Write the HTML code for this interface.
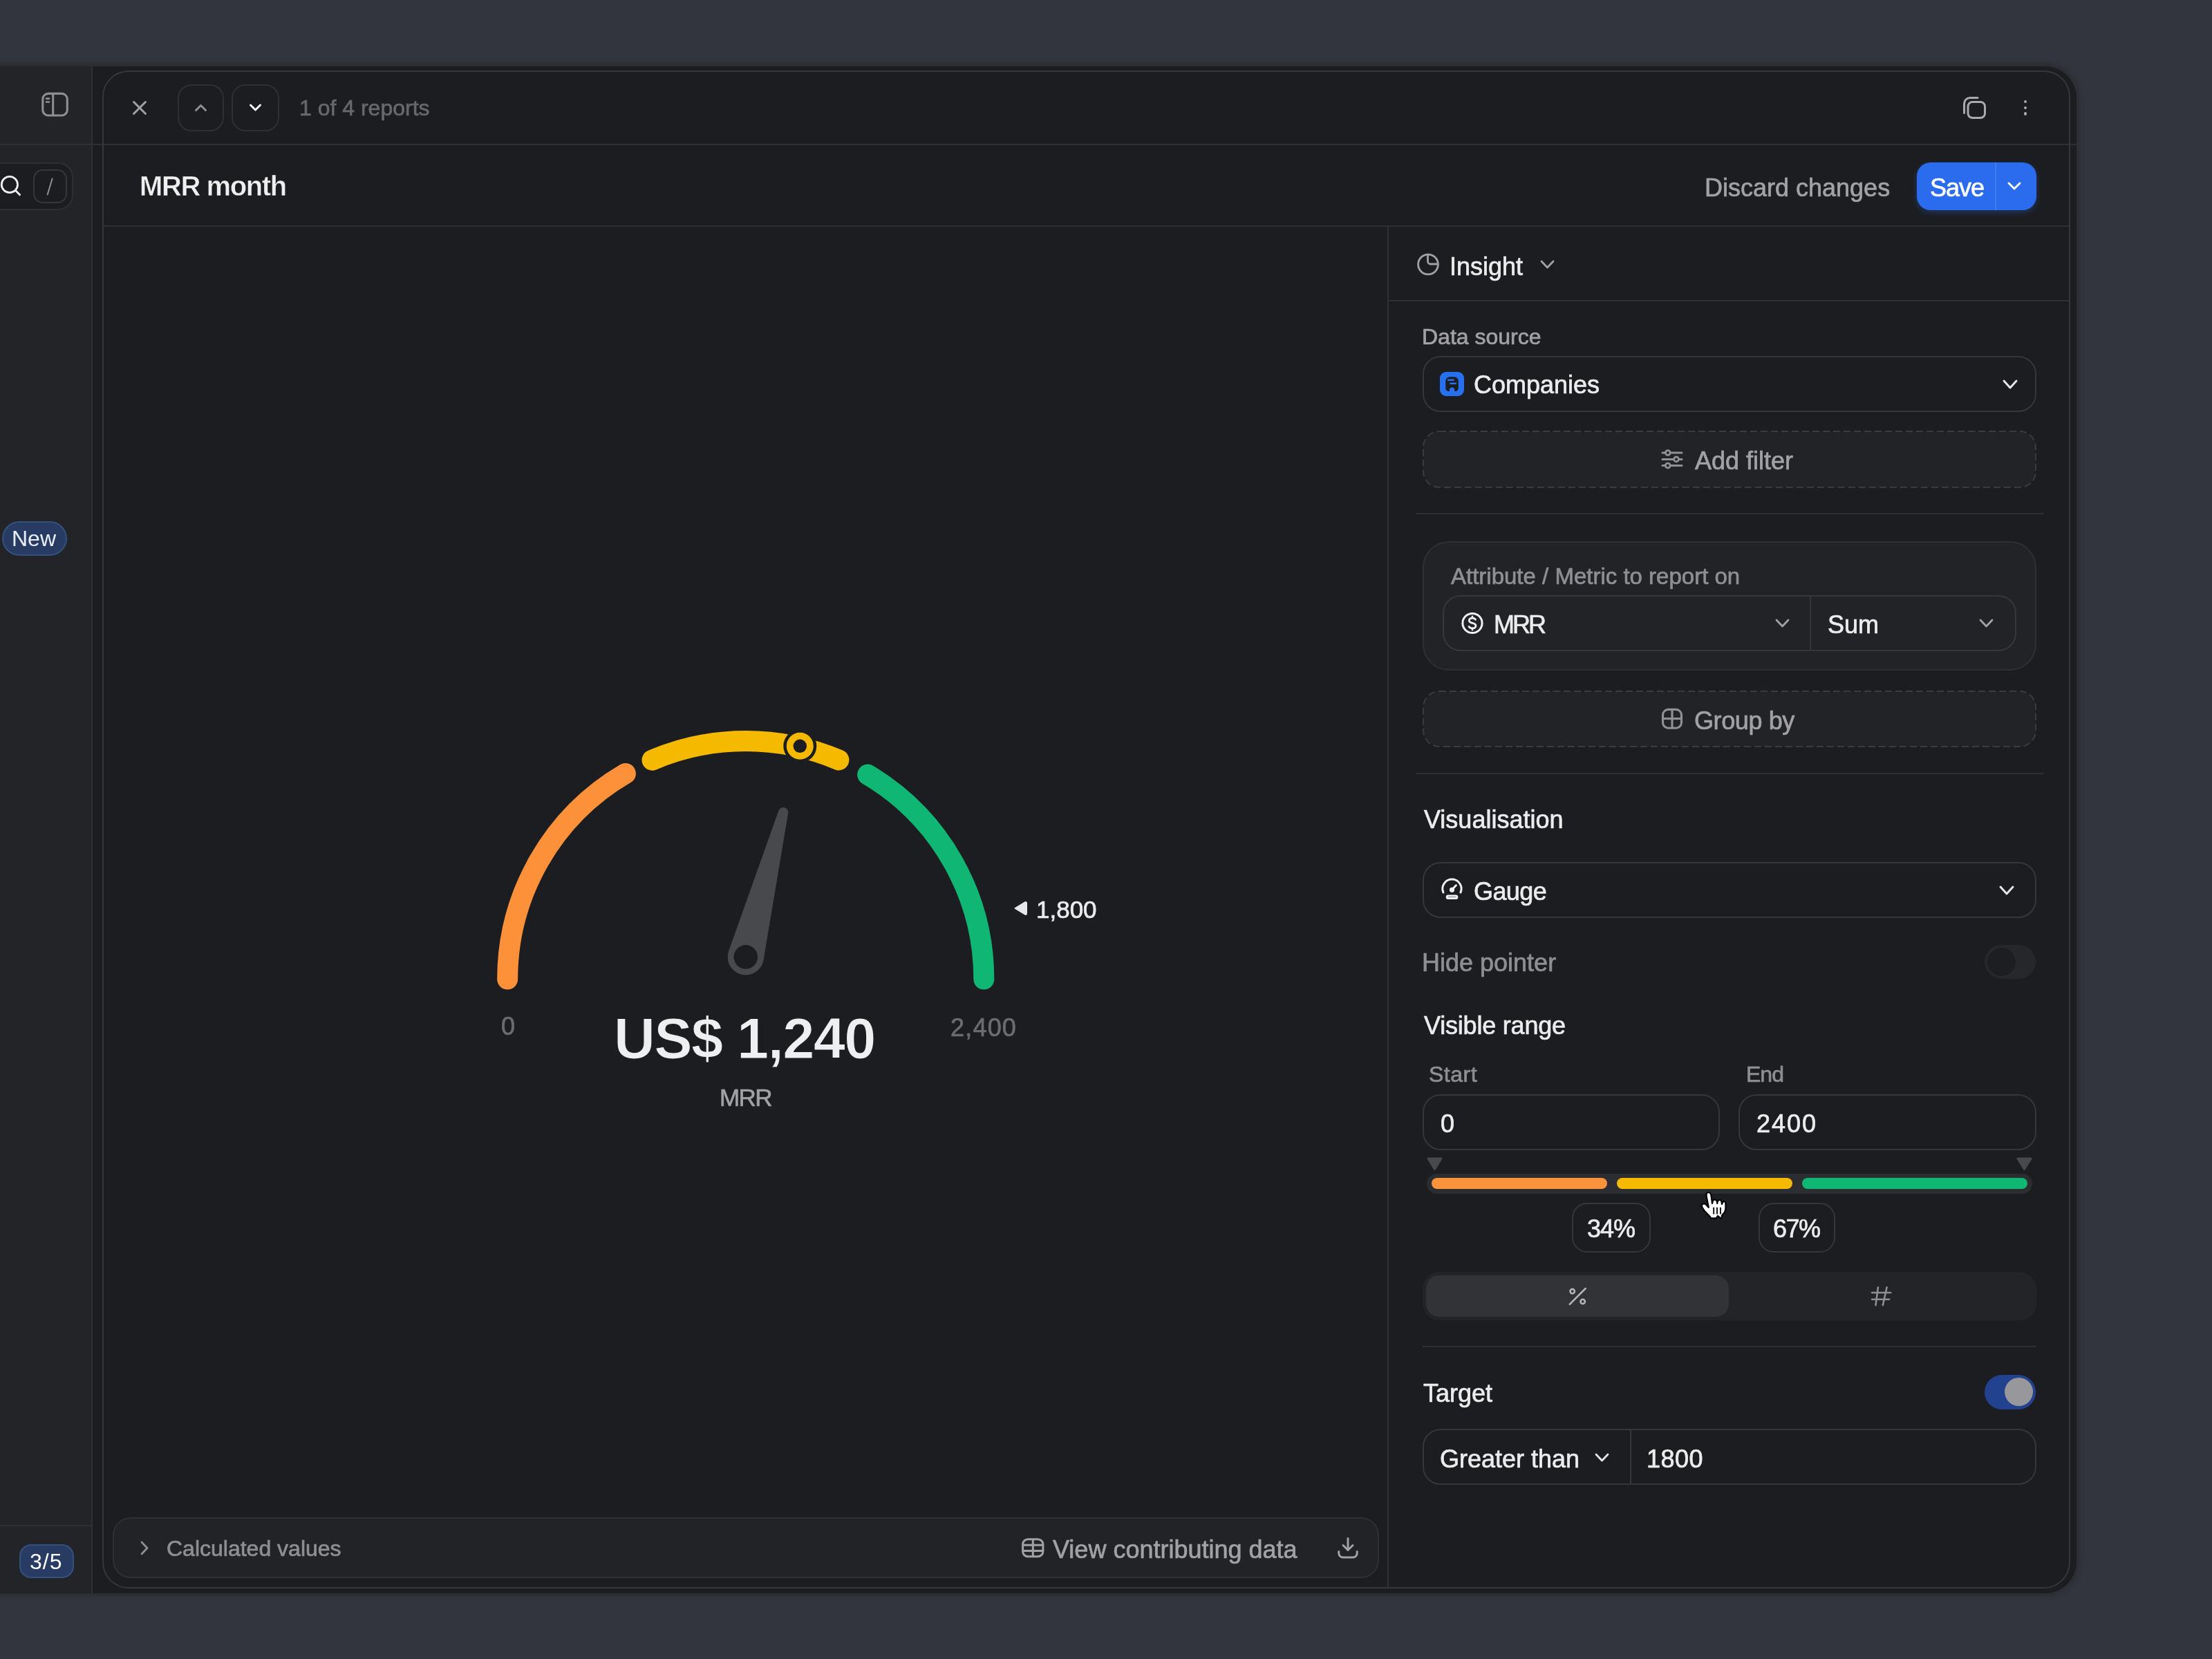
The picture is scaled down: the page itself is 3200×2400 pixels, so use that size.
<!DOCTYPE html>
<html><head><meta charset="utf-8"><style>
html,body{margin:0;padding:0;}
body{width:3200px;height:2400px;overflow:hidden;position:relative;background:#32353e;font-family:"Liberation Sans", sans-serif;}
.t{position:absolute;will-change:transform;font-family:"Liberation Sans", sans-serif;line-height:1;white-space:nowrap;}
</style></head><body>
<div style="position:absolute;left:-60px;top:96px;width:3064px;height:2209px;box-sizing:border-box;background:#1c1d20;border-radius:46px;box-shadow:0 0 7px 3px rgba(42,42,44,0.9);"></div>
<div style="position:absolute;left:0px;top:96px;width:134px;height:2209px;box-sizing:border-box;background:#232428;border-right:2px solid #2f3034;"></div>
<div style="position:absolute;left:0px;top:208px;width:3004px;height:2px;box-sizing:border-box;background:#2f3034;"></div>
<div style="position:absolute;left:0px;top:2206px;width:132px;height:2px;box-sizing:border-box;background:#2f3034;"></div>
<div style="position:absolute;left:148px;top:102px;width:2847px;height:2196px;box-sizing:border-box;border:2px solid #36373b;border-radius:38px;"></div>
<div style="position:absolute;left:150px;top:326px;width:2843px;height:2px;box-sizing:border-box;background:#2f3034;"></div>
<div style="position:absolute;left:2007px;top:328px;width:2px;height:1968px;box-sizing:border-box;background:#2f3034;"></div>
<div style="position:absolute;left:2009px;top:434px;width:984px;height:2px;box-sizing:border-box;background:#2f3034;"></div>
<svg style="position:absolute;left:58px;top:132px;overflow:visible;" width="44" height="40" viewBox="0 0 44 40"><rect x="3.8" y="3.4" width="35.5" height="31.6" rx="8" fill="none" stroke="#8e8f94" stroke-width="3.1"/><line x1="18.7" y1="3.4" x2="18.7" y2="35" stroke="#8e8f94" stroke-width="3"/><line x1="9" y1="10.6" x2="13" y2="10.6" stroke="#8e8f94" stroke-width="2.6" stroke-linecap="round"/><line x1="9" y1="15.5" x2="13" y2="15.5" stroke="#8e8f94" stroke-width="2.6" stroke-linecap="round"/></svg>
<div style="position:absolute;left:-40px;top:235px;width:146px;height:69px;box-sizing:border-box;background:#1c1d20;border:2px solid #2f3034;border-radius:22px;"></div>
<div style="position:absolute;left:48px;top:245px;width:49px;height:49px;box-sizing:border-box;border:2px solid #36373b;border-radius:14px;"></div>
<svg style="position:absolute;left:0px;top:252px;overflow:visible;" width="34" height="34" viewBox="0 0 34 34"><circle cx="13.9" cy="15" r="11.6" fill="none" stroke="#f0f0f2" stroke-width="2.8"/><line x1="22.4" y1="23.5" x2="28.6" y2="29.8" stroke="#f0f0f2" stroke-width="2.8" stroke-linecap="round"/></svg>
<svg style="position:absolute;left:60px;top:255px;overflow:visible;" width="24" height="32" viewBox="0 0 24 32"><line x1="15.6" y1="3.5" x2="8.7" y2="26.5" stroke="#8e8f94" stroke-width="2" stroke-linecap="round"/></svg>
<div style="position:absolute;left:3px;top:754px;width:94px;height:50px;box-sizing:border-box;background:#283c63;border:2px solid #33507f;border-radius:25px;"></div>
<div class="t" style="left:16.6px;top:762.8px;font-size:32px;color:#e8eefb;font-weight:400;letter-spacing:0px;-webkit-text-stroke:0.7px #e8eefb;-webkit-text-stroke:0;">New</div>
<div style="position:absolute;left:28px;top:2234px;width:79px;height:49px;box-sizing:border-box;background:#283c63;border:2px solid #33507f;border-radius:17px;"></div>
<div class="t" style="left:42.6px;top:2242.8px;font-size:32px;color:#ffffff;font-weight:400;letter-spacing:1px;-webkit-text-stroke:0.7px #ffffff;-webkit-text-stroke:0;">3/5</div>
<svg style="position:absolute;left:188px;top:142px;overflow:visible;" width="28" height="28" viewBox="0 0 28 28"><line x1="5.5" y1="5.5" x2="22.5" y2="22.5" stroke="#a1a1a6" stroke-width="3" stroke-linecap="round"/><line x1="22.5" y1="5.5" x2="5.5" y2="22.5" stroke="#a1a1a6" stroke-width="3" stroke-linecap="round"/></svg>
<div style="position:absolute;left:257px;top:122px;width:67px;height:68px;box-sizing:border-box;border:2px solid #2f3034;border-radius:20px;"></div>
<div style="position:absolute;left:335px;top:122px;width:69px;height:68px;box-sizing:border-box;border:2px solid #2f3034;border-radius:20px;"></div>
<svg style="position:absolute;left:278px;top:146px;overflow:visible;" width="26" height="20" viewBox="0 0 26 20"><polyline points="5.5,13.5 12.5,6.5 19.5,13.5" fill="none" stroke="#8e8f94" stroke-width="3" stroke-linecap="round" stroke-linejoin="round"/></svg>
<svg style="position:absolute;left:357px;top:146px;overflow:visible;" width="26" height="20" viewBox="0 0 26 20"><polyline points="5.5,6 12.5,13 19.5,6" fill="none" stroke="#f4f4f5" stroke-width="3" stroke-linecap="round" stroke-linejoin="round"/></svg>
<div class="t" style="left:433.4px;top:140.4px;font-size:32px;color:#67686d;font-weight:400;letter-spacing:0px;-webkit-text-stroke:0.7px #67686d;">1 of 4 reports</div>
<svg style="position:absolute;left:2836px;top:136px;overflow:visible;" width="40" height="40" viewBox="0 0 40 40"><rect x="11" y="11.5" width="24.5" height="23" rx="6.5" fill="none" stroke="#a9a9ae" stroke-width="3"/><path d="M5.5 27.5 V14 a8.5 8.5 0 0 1 8.5 -8.5 H25" fill="none" stroke="#a9a9ae" stroke-width="3" stroke-linecap="round"/></svg>
<div style="position:absolute;left:2928px;top:145.10000000000002px;width:4.400000000000091px;height:4.399999999999977px;box-sizing:border-box;background:#a9a9ae;border-radius:50%;"></div>
<div style="position:absolute;left:2928px;top:153.8px;width:4.400000000000091px;height:4.399999999999977px;box-sizing:border-box;background:#a9a9ae;border-radius:50%;"></div>
<div style="position:absolute;left:2928px;top:162.3px;width:4.400000000000091px;height:4.399999999999977px;box-sizing:border-box;background:#a9a9ae;border-radius:50%;"></div>
<div class="t" style="left:201.8px;top:249.6px;font-size:40px;color:#efeff0;font-weight:700;letter-spacing:-1.4px;-webkit-text-stroke:0.5px #1c1d20;margin-top:-1px;">MRR month</div>
<div class="t" style="left:2465.9px;top:254.3px;font-size:36px;color:#a1a1a6;font-weight:400;letter-spacing:0px;-webkit-text-stroke:0.7px #a1a1a6;">Discard changes</div>
<div style="position:absolute;left:2773px;top:235px;width:173px;height:69px;box-sizing:border-box;background:#2b6cee;border-radius:20px;box-shadow:0 3px 9px rgba(43,108,238,0.32);"></div>
<div style="position:absolute;left:2886px;top:235px;width:2px;height:69px;box-sizing:border-box;background:rgba(255,255,255,0.10);"></div>
<div class="t" style="left:2792.1px;top:254.3px;font-size:36px;color:#ffffff;font-weight:400;letter-spacing:-1px;-webkit-text-stroke:0.7px #ffffff;">Save</div>
<svg style="position:absolute;left:2900px;top:258px;overflow:visible;" width="28" height="22" viewBox="0 0 28 22"><polyline points="6,7 14,15 22,7" fill="none" stroke="#ffffff" stroke-width="3" stroke-linecap="round" stroke-linejoin="round"/></svg>
<svg style="position:absolute;left:2046px;top:364px;overflow:visible;" width="40" height="38" viewBox="0 0 40 38"><circle cx="20" cy="18.5" r="14.4" fill="none" stroke="#a1a1a6" stroke-width="2.8"/><path d="M19.5 4.5 V14 a4 4 0 0 0 4 4 H34" fill="none" stroke="#a1a1a6" stroke-width="2.8"/></svg>
<div class="t" style="left:2096.5px;top:367.9px;font-size:36px;color:#ececed;font-weight:400;letter-spacing:0px;-webkit-text-stroke:0.7px #ececed;">Insight</div>
<svg style="position:absolute;left:2225.5px;top:374.0px;overflow:visible;" width="25" height="17" viewBox="0 0 25 17"><polyline points="4,4 12.5,13 21,4" fill="none" stroke="#a1a1a6" stroke-width="2.8" stroke-linecap="round" stroke-linejoin="round"/></svg>
<div class="t" style="left:2057.2px;top:470.8px;font-size:32px;color:#a1a1a6;font-weight:400;letter-spacing:0px;-webkit-text-stroke:0.7px #a1a1a6;">Data source</div>
<div style="position:absolute;left:2058px;top:515px;width:888px;height:81px;box-sizing:border-box;border:2px solid #36373b;border-radius:26px;"></div>
<svg style="position:absolute;left:2083px;top:538px;overflow:visible;" width="35" height="35" viewBox="0 0 35 35"><rect x="0" y="0" width="35" height="35" rx="9" fill="#2770f0"/><path d="M8.3 13.2 a6 6 0 0 1 6 -6 h6.5 a6 6 0 0 1 6 6 v10.3 a4.5 4.5 0 0 1 -4.5 4.5 H21.2 V26.25 a3.65 3.65 0 0 0 -7.3 0 V28 H12.8 a4.5 4.5 0 0 1 -4.5 -4.5 Z" fill="#1c1d20"/><line x1="12.2" y1="11.8" x2="19.6" y2="11.8" stroke="#2770f0" stroke-width="2.6" stroke-linecap="round"/><line x1="15.4" y1="16.8" x2="22.8" y2="16.8" stroke="#2770f0" stroke-width="2.6" stroke-linecap="round"/></svg>
<div class="t" style="left:2132.1px;top:539.3px;font-size:36px;color:#ececed;font-weight:400;letter-spacing:0px;-webkit-text-stroke:0.7px #ececed;">Companies</div>
<svg style="position:absolute;left:2895.0px;top:546.5px;overflow:visible;" width="26" height="18" viewBox="0 0 26 18"><polyline points="4,4 13.0,14 22,4" fill="none" stroke="#e6e6e8" stroke-width="3" stroke-linecap="round" stroke-linejoin="round"/></svg>
<svg style="position:absolute;left:2058px;top:623px;overflow:visible;" width="888" height="83" viewBox="0 0 888 83"><rect x="1" y="1" width="886" height="81" rx="23" fill="#222327" stroke="#3a3b3f" stroke-width="2" stroke-dasharray="10 5"/></svg>
<svg style="position:absolute;left:2400px;top:646px;overflow:visible;" width="38" height="36" viewBox="0 0 38 36"><g stroke="#909196" stroke-width="3" stroke-linecap="round" fill="none"><line x1="5" y1="9" x2="33" y2="9"/><line x1="5" y1="18.4" x2="33" y2="18.4"/><line x1="5" y1="27.5" x2="33" y2="27.5"/></g><g fill="#222327" stroke="#909196" stroke-width="2.8"><circle cx="12.8" cy="9" r="3.4"/><circle cx="25.1" cy="18.4" r="3.4"/><circle cx="12.8" cy="27.5" r="3.4"/></g></svg>
<div class="t" style="left:2451.5px;top:649.1px;font-size:36px;color:#a1a1a6;font-weight:400;letter-spacing:0px;-webkit-text-stroke:0.7px #a1a1a6;">Add filter</div>
<div style="position:absolute;left:2048px;top:742px;width:908px;height:2px;box-sizing:border-box;background:#2f3034;"></div>
<div style="position:absolute;left:2058px;top:783px;width:888px;height:187px;box-sizing:border-box;background:#222327;border:2px solid #2f3034;border-radius:38px;"></div>
<div class="t" style="left:2098.9px;top:817.2px;font-size:33px;color:#8e8f94;font-weight:400;letter-spacing:0px;-webkit-text-stroke:0.7px #8e8f94;">Attribute / Metric to report on</div>
<div style="position:absolute;left:2087px;top:861px;width:830px;height:81px;box-sizing:border-box;border:2px solid #36373b;border-radius:26px;"></div>
<div style="position:absolute;left:2618px;top:861px;width:2px;height:81px;box-sizing:border-box;background:#36373b;"></div>
<svg style="position:absolute;left:2112px;top:884px;overflow:visible;" width="36" height="36" viewBox="0 0 36 36"><circle cx="18" cy="17.5" r="14.1" fill="none" stroke="#f0f0f2" stroke-width="3"/><path d="M22.6 12.4 c-0.9 -1.5 -2.6 -2.2 -4.6 -2.2 c-2.8 0 -4.6 1.5 -4.6 3.5 c0 4.9 9.6 2.5 9.6 7.5 c0 2.1 -2 3.6 -5 3.6 c-2.2 0 -4 -0.8 -4.9 -2.3" fill="none" stroke="#f0f0f2" stroke-width="2.8" stroke-linecap="round"/><line x1="18" y1="8" x2="18" y2="10" stroke="#f0f0f2" stroke-width="2.8" stroke-linecap="round"/><line x1="18" y1="25.2" x2="18" y2="27" stroke="#f0f0f2" stroke-width="2.8" stroke-linecap="round"/></svg>
<div class="t" style="left:2160.9px;top:886.3px;font-size:36px;color:#ececed;font-weight:400;letter-spacing:-3px;-webkit-text-stroke:0.7px #ececed;">MRR</div>
<svg style="position:absolute;left:2565.5px;top:893.0px;overflow:visible;" width="25" height="17" viewBox="0 0 25 17"><polyline points="4,4 12.5,13 21,4" fill="none" stroke="#a1a1a6" stroke-width="2.8" stroke-linecap="round" stroke-linejoin="round"/></svg>
<div class="t" style="left:2643.7px;top:886.3px;font-size:36px;color:#ececed;font-weight:400;letter-spacing:0px;-webkit-text-stroke:0.7px #ececed;">Sum</div>
<svg style="position:absolute;left:2861.0px;top:893.0px;overflow:visible;" width="25" height="17" viewBox="0 0 25 17"><polyline points="4,4 12.5,13 21,4" fill="none" stroke="#a1a1a6" stroke-width="2.8" stroke-linecap="round" stroke-linejoin="round"/></svg>
<svg style="position:absolute;left:2058px;top:999px;overflow:visible;" width="888" height="82" viewBox="0 0 888 82"><rect x="1" y="1" width="886" height="80" rx="23" fill="#222327" stroke="#3a3b3f" stroke-width="2" stroke-dasharray="10 5"/></svg>
<svg style="position:absolute;left:2400px;top:1022px;overflow:visible;" width="38" height="36" viewBox="0 0 38 36"><g fill="none" stroke="#909196" stroke-width="3.1"><rect x="5.5" y="4.4" width="27" height="26.9" rx="8"/><line x1="19" y1="4.4" x2="19" y2="31.3"/><line x1="5.5" y1="17.6" x2="32.5" y2="17.6"/></g></svg>
<div class="t" style="left:2450.5px;top:1025.1px;font-size:36px;color:#a1a1a6;font-weight:400;letter-spacing:-0.4px;-webkit-text-stroke:0.7px #a1a1a6;">Group by</div>
<div style="position:absolute;left:2048px;top:1118px;width:908px;height:2px;box-sizing:border-box;background:#2f3034;"></div>
<div class="t" style="left:2059.9px;top:1168.1px;font-size:36px;color:#ececed;font-weight:400;letter-spacing:0px;-webkit-text-stroke:0.7px #ececed;">Visualisation</div>
<div style="position:absolute;left:2058px;top:1247px;width:888px;height:81px;box-sizing:border-box;border:2px solid #36373b;border-radius:26px;"></div>
<svg style="position:absolute;left:2082px;top:1268px;overflow:visible;" width="38" height="38" viewBox="0 0 38 38"><g fill="none" stroke="#f0f0f2" stroke-width="3" stroke-linecap="round"><path d="M5.95 23.06 A13.6 13.6 0 1 1 30.95 23.06"/><rect x="11.2" y="27.9" width="14.7" height="3.7" rx="1.85"/><line x1="18.5" y1="19" x2="24.5" y2="12.8"/></g><circle cx="18.5" cy="19.3" r="3.6" fill="#f0f0f2"/></svg>
<div class="t" style="left:2132.1px;top:1272.1px;font-size:36px;color:#ececed;font-weight:400;letter-spacing:-0.6px;-webkit-text-stroke:0.7px #ececed;">Gauge</div>
<svg style="position:absolute;left:2890.0px;top:1278.5px;overflow:visible;" width="26" height="18" viewBox="0 0 26 18"><polyline points="4,4 13.0,14 22,4" fill="none" stroke="#e6e6e8" stroke-width="3" stroke-linecap="round" stroke-linejoin="round"/></svg>
<div class="t" style="left:2056.9px;top:1375.3px;font-size:36px;color:#8e8f94;font-weight:400;letter-spacing:0px;-webkit-text-stroke:0.7px #8e8f94;">Hide pointer</div>
<div style="position:absolute;left:2871px;top:1367px;width:74px;height:49px;box-sizing:border-box;background:#26272b;border-radius:25px;"></div>
<div style="position:absolute;left:2875px;top:1371px;width:41px;height:41px;box-sizing:border-box;background:#1d1e21;border-radius:50%;box-shadow:0 0 0 1px #2a2b2f;"></div>
<div class="t" style="left:2059.9px;top:1465.5px;font-size:36px;color:#ececed;font-weight:400;letter-spacing:-0.2px;-webkit-text-stroke:0.7px #ececed;">Visible range</div>
<div class="t" style="left:2067.2px;top:1538.0px;font-size:32px;color:#8e8f94;font-weight:400;letter-spacing:0.5px;-webkit-text-stroke:0.7px #8e8f94;">Start</div>
<div class="t" style="left:2525.8px;top:1538.0px;font-size:32px;color:#8e8f94;font-weight:400;letter-spacing:-1px;-webkit-text-stroke:0.7px #8e8f94;">End</div>
<div style="position:absolute;left:2058px;top:1583px;width:430px;height:81px;box-sizing:border-box;border:2px solid #36373b;border-radius:26px;"></div>
<div style="position:absolute;left:2515px;top:1583px;width:431px;height:81px;box-sizing:border-box;border:2px solid #36373b;border-radius:26px;"></div>
<div class="t" style="left:2083.5px;top:1607.5px;font-size:36px;color:#ececed;font-weight:400;letter-spacing:0px;-webkit-text-stroke:0.7px #ececed;">0</div>
<div class="t" style="left:2540.5px;top:1607.5px;font-size:36px;color:#ececed;font-weight:400;letter-spacing:2px;-webkit-text-stroke:0.7px #ececed;">2400</div>
<svg style="position:absolute;left:2063px;top:1673px;overflow:visible;" width="26" height="22" viewBox="0 0 26 22"><path d="M3 3 H22 L12.5 18.5 Z" fill="#48494d" stroke="#48494d" stroke-width="3" stroke-linejoin="round"/></svg>
<svg style="position:absolute;left:2916px;top:1673px;overflow:visible;" width="26" height="22" viewBox="0 0 26 22"><path d="M3 3 H22 L12.5 18.5 Z" fill="#48494d" stroke="#48494d" stroke-width="3" stroke-linejoin="round"/></svg>
<div style="position:absolute;left:2064px;top:1698px;width:876px;height:29px;box-sizing:border-box;background:#2c2d31;border-radius:15px;"></div>
<div style="position:absolute;left:2071px;top:1704px;width:254px;height:16px;box-sizing:border-box;background:#fb923c;border-radius:8px;"></div>
<div style="position:absolute;left:2339px;top:1704px;width:254px;height:16px;box-sizing:border-box;background:#f5b900;border-radius:8px;"></div>
<div style="position:absolute;left:2607px;top:1704px;width:326px;height:16px;box-sizing:border-box;background:#10b674;border-radius:8px;"></div>
<div style="position:absolute;left:2274px;top:1740px;width:114px;height:72px;box-sizing:border-box;border:2px solid #36373b;border-radius:22px;"></div>
<div style="position:absolute;left:2544px;top:1740px;width:111px;height:72px;box-sizing:border-box;border:2px solid #36373b;border-radius:22px;"></div>
<div class="t" style="left:2295.5px;top:1760.1px;font-size:36px;color:#ececed;font-weight:400;letter-spacing:-1px;-webkit-text-stroke:0.7px #ececed;">34%</div>
<div class="t" style="left:2564.5px;top:1760.1px;font-size:36px;color:#ececed;font-weight:400;letter-spacing:-1.5px;-webkit-text-stroke:0.7px #ececed;">67%</div>
<div style="position:absolute;left:2058px;top:1840px;width:888px;height:70px;box-sizing:border-box;background:#232428;border-radius:24px;"></div>
<div style="position:absolute;left:2063px;top:1845px;width:438px;height:60px;box-sizing:border-box;background:#323337;border-radius:19px;"></div>
<svg style="position:absolute;left:2266px;top:1858px;overflow:visible;" width="34" height="34" viewBox="0 0 34 34"><g fill="none" stroke="#b4b4b8" stroke-width="2.6" stroke-linecap="round"><line x1="4.8" y1="28.8" x2="27.8" y2="5.8"/><circle cx="8.7" cy="10.1" r="3.2"/><circle cx="23.7" cy="24.9" r="3.2"/></g></svg>
<svg style="position:absolute;left:2703px;top:1858px;overflow:visible;" width="38" height="36" viewBox="0 0 38 36"><g fill="none" stroke="#8e8f94" stroke-width="2.6" stroke-linecap="round"><line x1="13.9" y1="4.2" x2="10.5" y2="30.2"/><line x1="26.6" y1="4.2" x2="20.8" y2="30.2"/><line x1="5" y1="12" x2="32.2" y2="12"/><line x1="5" y1="21.7" x2="30" y2="21.7"/></g></svg>
<div style="position:absolute;left:2058px;top:1947px;width:888px;height:2px;box-sizing:border-box;background:#2f3034;"></div>
<div class="t" style="left:2058.9px;top:1998.1px;font-size:36px;color:#ececed;font-weight:400;letter-spacing:0px;-webkit-text-stroke:0.7px #ececed;">Target</div>
<div style="position:absolute;left:2871px;top:1989px;width:74px;height:50px;box-sizing:border-box;background:#22428f;border-radius:25px;"></div>
<div style="position:absolute;left:2900px;top:1993px;width:41px;height:41px;box-sizing:border-box;background:#98989c;border-radius:50%;"></div>
<div style="position:absolute;left:2058px;top:2067px;width:888px;height:81px;box-sizing:border-box;border:2px solid #36373b;border-radius:26px;"></div>
<div style="position:absolute;left:2358px;top:2067px;width:2px;height:81px;box-sizing:border-box;background:#36373b;"></div>
<div class="t" style="left:2082.5px;top:2092.9px;font-size:36px;color:#ececed;font-weight:400;letter-spacing:0px;-webkit-text-stroke:0.7px #ececed;">Greater than</div>
<svg style="position:absolute;left:2305.0px;top:2099.5px;overflow:visible;" width="25" height="17" viewBox="0 0 25 17"><polyline points="4,4 12.5,13 21,4" fill="none" stroke="#e6e6e8" stroke-width="2.8" stroke-linecap="round" stroke-linejoin="round"/></svg>
<div class="t" style="left:2382.1px;top:2092.9px;font-size:36px;color:#ececed;font-weight:400;letter-spacing:0.5px;-webkit-text-stroke:0.7px #ececed;">1800</div>
<div style="position:absolute;left:163px;top:2195px;width:1832px;height:88px;box-sizing:border-box;background:#222327;border:2px solid #2f3034;border-radius:26px;"></div>
<svg style="position:absolute;left:199px;top:2226px;overflow:visible;" width="22" height="28" viewBox="0 0 22 28"><polyline points="6,5 14,13.5 6,22" fill="none" stroke="#8e8f94" stroke-width="2.8" stroke-linecap="round" stroke-linejoin="round"/></svg>
<div class="t" style="left:241.2px;top:2223.8px;font-size:32px;color:#8e8f94;font-weight:400;letter-spacing:0px;-webkit-text-stroke:0.7px #8e8f94;">Calculated values</div>
<svg style="position:absolute;left:1474px;top:2222px;overflow:visible;" width="40" height="36" viewBox="0 0 40 36"><g fill="none" stroke="#a1a1a6" stroke-width="3"><rect x="5.6" y="4.7" width="29.3" height="25.1" rx="7.5"/><line x1="5.6" y1="13.2" x2="34.9" y2="13.2"/><line x1="5.6" y1="21.5" x2="34.9" y2="21.5"/><line x1="20.3" y1="4.7" x2="20.3" y2="29.8"/></g></svg>
<div class="t" style="left:1523.1px;top:2223.7px;font-size:36px;color:#a1a1a6;font-weight:400;letter-spacing:0px;-webkit-text-stroke:0.7px #a1a1a6;">View contributing data</div>
<svg style="position:absolute;left:1930px;top:2220px;overflow:visible;" width="40" height="40" viewBox="0 0 40 40"><g fill="none" stroke="#a1a1a6" stroke-width="3" stroke-linecap="round" stroke-linejoin="round"><line x1="20" y1="5.5" x2="20" y2="22"/><polyline points="13,15.5 20,22.5 27,15.5"/><path d="M6.8 24.5 v2.5 a6 6 0 0 0 6 6 h14.4 a6 6 0 0 0 6 -6 v-2.5"/></g></svg>
<svg style="position:absolute;left:0;top:0" width="3200" height="2400" viewBox="0 0 3200 2400"><path d="M734.15 1416.60 A344.6 344.6 0 0 1 904.89 1119.07" fill="none" stroke="#fc913a" stroke-width="30" stroke-linecap="round"/><path d="M943.55 1099.63 A344.6 344.6 0 0 1 1213.40 1099.39" fill="none" stroke="#f5b900" stroke-width="30" stroke-linecap="round"/><path d="M1255.20 1120.60 A344.6 344.6 0 0 1 1423.35 1416.60" fill="none" stroke="#10b674" stroke-width="30" stroke-linecap="round"/><circle cx="1157.3" cy="1079.3" r="24" fill="#1c1d20"/><circle cx="1157.3" cy="1079.3" r="19.5" fill="#f5b900"/><circle cx="1157.3" cy="1079.3" r="9.7" fill="#1c1d20"/><path d="M1104.54 1388.72 L1140.20 1176.49 L1126.32 1172.89 L1054.21 1375.65 Z" fill="#48494d"/><circle cx="1078.8" cy="1384.4" r="26.1" fill="#48494d"/><circle cx="1133.1" cy="1175.3" r="7.2" fill="#48494d"/><circle cx="1078.8" cy="1384.4" r="17.3" fill="#1c1d20"/><path d="M1468.5 1314 L1482.5 1305.5 Q1485 1304 1485 1307 V1321 Q1485 1324 1482.5 1322.5 Z" fill="#e8e8ea" stroke="#e8e8ea" stroke-width="2" stroke-linejoin="round"/></svg>
<div class="t" style="left:888.2px;top:1460.5px;font-size:83px;color:#eeeff0;font-weight:700;letter-spacing:-1.6px;-webkit-text-stroke:1.1px #1c1d20;">US$ 1,240</div>
<div class="t" style="left:1041.0px;top:1570.1px;font-size:35px;color:#a1a1a6;font-weight:400;letter-spacing:-1.6px;-webkit-text-stroke:0.7px #a1a1a6;">MRR</div>
<div class="t" style="left:724.7px;top:1467.3px;font-size:36px;color:#6b6c71;font-weight:400;letter-spacing:0px;-webkit-text-stroke:0.7px #6b6c71;">0</div>
<div class="t" style="left:1375.1px;top:1468.7px;font-size:36px;color:#6b6c71;font-weight:400;letter-spacing:1.2px;-webkit-text-stroke:0.7px #6b6c71;">2,400</div>
<div class="t" style="left:1499.0px;top:1297.5px;font-size:35px;color:#ebebec;font-weight:400;letter-spacing:0px;-webkit-text-stroke:0.7px #ebebec;">1,800</div>
<svg style="position:absolute;left:0;top:0" width="3200" height="2400" viewBox="0 0 3200 2400"><path d="M2471.8 1746.8 L2468.6 1730.5 Q2468 1725 2471.5 1725 Q2474.8 1725 2475.6 1730 L2477 1741 L2477.6 1738 Q2478.5 1735.5 2480.6 1735.5 Q2483.2 1735.5 2484 1738.5 L2484.2 1741 L2484.6 1738.6 Q2485.5 1736 2487.8 1736 Q2490.2 1736 2490.6 1739 L2491 1742 L2492 1739.6 Q2493 1738 2494.6 1738.2 Q2496.4 1738.6 2496.4 1741 L2496.4 1748 Q2496.2 1753 2492.6 1756.2 Q2491 1758 2490.8 1760 L2490.6 1762.4 L2489.2 1762.4 L2485.1 1759 L2482.6 1762.3 L2474.6 1762.3 L2474.2 1760.5 L2466 1752 L2462 1745.8 Q2461 1742.6 2463.6 1741.6 Q2466.2 1740.6 2468.2 1742.8 Z" fill="#ffffff" stroke="#000" stroke-width="2.2" stroke-linejoin="round"/><g stroke="#000" stroke-width="1.8" stroke-linecap="round"><line x1="2479.2" y1="1747.3" x2="2479.2" y2="1755.8"/><line x1="2484" y1="1747.3" x2="2484" y2="1755.8"/><line x1="2488.9" y1="1747.3" x2="2488.9" y2="1755.8"/></g></svg>
</body></html>
